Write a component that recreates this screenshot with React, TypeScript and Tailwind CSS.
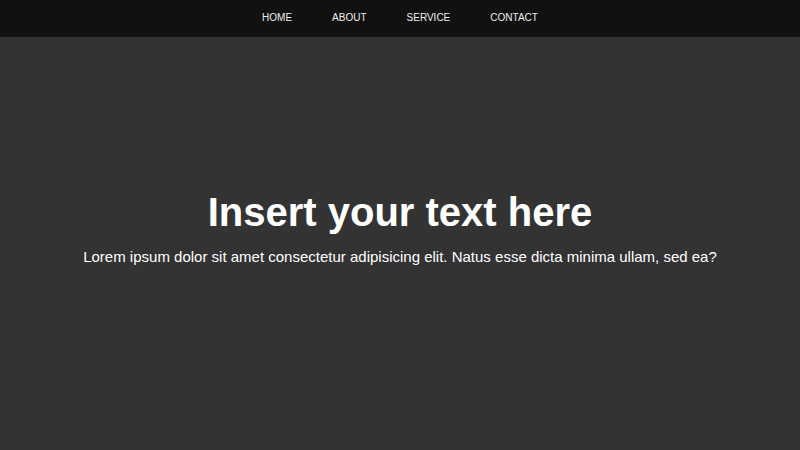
const LINKS = ['HOME', 'ABOUT', 'SERVICE', 'CONTACT'];

export default function App() {
  return (
    <div className="flex h-[450px] w-[800px] flex-col bg-[#333333] font-['Liberation_Sans',Arial,sans-serif] text-white">
      <nav className="flex h-[37px] items-center justify-center bg-[#111111] pb-[2px]">
        {LINKS.map((l) => (
          <a key={l} href="#" className="px-5 text-[10px] text-[#eeeeee]">
            {l}
          </a>
        ))}
      </nav>
      <main className="flex flex-1 flex-col items-center justify-center pb-[31px] text-center">
        <h1 className="text-[40px] font-bold leading-tight">Insert your text here</h1>
        <p className="mt-[9px] text-[15px]">
          Lorem ipsum dolor sit amet consectetur adipisicing elit. Natus esse dicta minima ullam, sed ea?
        </p>
      </main>
    </div>
  );
}
